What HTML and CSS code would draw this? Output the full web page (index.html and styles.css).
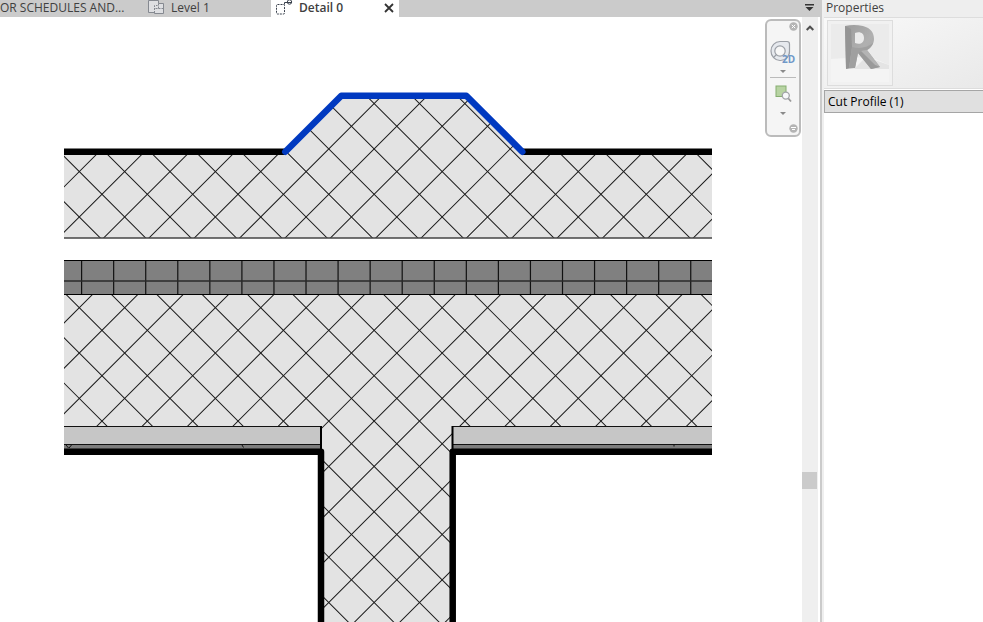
FILE: index.html
```html
<!DOCTYPE html>
<html lang="en">
<head>
    <meta charset="UTF-8">
    <meta name="viewport" content="width=device-width, initial-scale=1.0">
    <title>Detail 0</title>
    <link rel="stylesheet" href="styles.css">
</head>
<body>
    <div class="app">
        <main class="workspace">
            <nav class="tabs">
                <button class="tab tab-first">OR SCHEDULES AND...</button>
                <button class="tab tab-level">
                    <svg class="tab-icon" width="17" height="15" viewBox="0 0 17 15" fill="#dedfe2" stroke="#858990">
                        <path d="M.5 .5h10v3h5v10h-9v-1h-6z"/>
                        <path d="M6.500 13V5.500h3M10.500 3.500v5h-4M15.500 8.500h-5" fill="none" stroke-dasharray="2 1"/>
                    </svg>
                    Level 1
                </button>
                <div class="tab-active">
                    <button class="tab">
                        <svg class="tab-icon" width="17" height="15" viewBox="0 0 17 15" fill="none" stroke="#39404c">
                            <rect x=".5" y="4.500" width="8" height="9.500" rx="1" stroke-dasharray="2 1"/>
                            <path d="M8.500 4.500v-2h3M11 2.500h5"/>
                            <circle cx="13.500" cy="2" r="2.200"/>
                        </svg>
                        Detail 0
                    </button>
                    <button class="tab-close" aria-label="Close tab">
                        <svg width="10" height="10" viewBox="0 0 10 10" stroke="#333" stroke-width="1.800"><path d="M1 1l8 8M9 1L1 9"/></svg>
                    </button>
                </div>
                <button class="tab-list" aria-label="Show all tabs">
                    <svg width="9" height="8" viewBox="0 0 9 8" fill="#333"><path d="M0 0h9v1.500H0zM0.500 3h8L4.500 7z"/></svg>
                </button>
            </nav>

            <div class="view">
                <div class="canvas">
                    <svg class="drawing" viewBox="0 17 802 605" preserveAspectRatio="xMinYMin slice">
                        <defs>
                            <clipPath id="walls">
                                <path d="M64 152H285L341 96H466L522 152H712V238H64z"/>
                                <path d="M64 295H712V426H452V622H321V426H64z"/>
                            </clipPath>
                        </defs>

                        <!-- concrete with diagonal hatch -->
                        <g clip-path="url(#walls)">
                            <rect x="64" y="90" width="648" height="532" fill="#e3e3e3"/>
                            <g stroke="#1c1c1c" stroke-width="3000" stroke-dasharray="1 31.074" stroke-dashoffset=".5">
                                <path d="M-374.300 -282L1200 1292.300"/>
                                <path d="M-374.300 625.200L1200 -949.100"/>
                            </g>
                        </g>
                        <path d="M64 238H712" stroke="#444" stroke-width="1.300"/>

                        <!-- insulation -->
                        <rect x="64" y="260" width="648" height="35" fill="#808080"/>
                        <path d="M81 277.500H712" stroke="#111" stroke-width="34" stroke-dasharray="1.200 30.860"/>
                        <path d="M64 281H712" stroke="#2a2a2a" stroke-width="1.500"/>
                        <path d="M64 260.500H712M64 294.500H712" stroke="#000"/>

                        <!-- finish layers -->
                        <path d="M64 426H321V444H64zM452 426H712V444H452z" fill="#c6c6c6"/>
                        <path d="M64 444H321V450H64zM452 444H712V450H452z" fill="#7d7d7d"/>
                        <path d="M64 426.500H321M452 426.500H712M64 444.500H321M452 444.500H712" stroke="#111"/>
                        <path d="M66 445l2.500 3M71.500 445l-2.500 3M242 445l1.500 2.500M674 445v1.500" fill="none" stroke="#111"/>
                        <path d="M321 426V450M452.500 426V450" stroke="#000" stroke-width="2"/>

                        <!-- cut outline -->
                        <g fill="none" stroke="#000" stroke-width="6.500" stroke-linejoin="round">
                            <path d="M64 151.700H285M522 151.700H712"/>
                            <path d="M64 451.700H321V622M712 451.700H452.700V622"/>
                        </g>
                        <path d="M285.300 151.700L341.300 95.700H466.300L522.300 151.700" fill="none" stroke="#0039c0" stroke-width="6.500" stroke-linejoin="round" stroke-linecap="round"/>
                    </svg>

                    <div class="navbar">
                        <button class="nav-small" aria-label="Close">
                            <svg width="9" height="9" viewBox="0 0 9 9"><circle cx="4.500" cy="4.500" r="4.200" fill="#b4b4b4"/><path d="M2.800 2.800l3.400 3.400M6.200 2.800L2.800 6.200" stroke="#fff"/></svg>
                        </button>
                        <button class="nav-tool nav-wheel" aria-label="2D steering wheel">
                            <svg width="26" height="26" viewBox="0 0 26 26" fill="#e6e9ee" stroke="#9b9fa6" stroke-width="1.200">
                                <path d="M10 1.500H17Q19.500 1.500 19.500 4V11A9 9 0 0 1 10 20.500A9.300 9.300 0 0 1 1 11A9.300 9.300 0 0 1 10 1.500z"/>
                                <circle cx="10" cy="11" r="5.200" fill="#f7f7f7"/>
                                <path d="M6.500 14.500L3.500 17.500M13.500 14.500l2 2"/>
                                <text x="12" y="23" class="nav-2d">2D</text>
                            </svg>
                        </button>
                        <button class="nav-arrow" aria-label="Wheel options">
                            <svg width="6" height="3" viewBox="0 0 6 3" fill="#8a8a8a"><path d="M0 0h6L3 3z"/></svg>
                        </button>
                        <hr class="nav-line">
                        <button class="nav-tool nav-zoom" aria-label="Zoom in region">
                            <svg width="17" height="18" viewBox="0 0 17 18">
                                <rect x="1" y="1" width="10" height="10.500" fill="#b7d3a2" stroke="#86ad70"/>
                                <path d="M13 13l3 3.500" stroke="#999" stroke-width="1.800"/>
                                <circle cx="10.800" cy="10.600" r="3.500" fill="#f7f8fa" stroke="#a0a3a8" stroke-width="1.300"/>
                            </svg>
                        </button>
                        <button class="nav-arrow" aria-label="Zoom options">
                            <svg width="6" height="3" viewBox="0 0 6 3" fill="#8a8a8a"><path d="M0 0h6L3 3z"/></svg>
                        </button>
                        <button class="nav-small nav-menu" aria-label="Customize">
                            <svg width="9" height="9" viewBox="0 0 9 9"><circle cx="4.500" cy="4.500" r="4.200" fill="#b4b4b4"/><path d="M2 3.500h5M3 5.500h3" stroke="#fff"/></svg>
                        </button>
                    </div>
                </div>
                <div class="scrollbar">
                    <button class="scroll-up" aria-label="Scroll up">
                        <svg width="8" height="6" viewBox="0 0 8 6" fill="none" stroke="#505050" stroke-width="2"><path d="M.7 5L4 1.700L7.300 5"/></svg>
                    </button>
                    <div class="scroll-track">
                        <div class="scroll-thumb"></div>
                    </div>
                </div>
            </div>
        </main>

        <aside class="properties">
            <h2 class="properties-title">Properties</h2>
            <div class="type-preview">
                <div class="type-image">
                    <svg width="60" height="60" viewBox="0 0 60 60">
                        <defs>
                            <linearGradient id="face" x1="0" y1="0" x2="1" y2="1">
                                <stop offset="0" stop-color="#9c9c9c"/>
                                <stop offset=".5" stop-color="#b0b0b0"/>
                                <stop offset="1" stop-color="#a2a2a2"/>
                            </linearGradient>
                        </defs>
                        <path d="M1 1H59V42L40 34L1 36z" fill="#ebebeb"/>
                        <path d="M1 36L40 34L59 42V59H1z" fill="#f4f4f4"/>
                        <path d="M24 46L36 34L59 42V46z" fill="#e4e4e4"/>
                        <path fill="url(#face)" fill-rule="evenodd" d="M15 3Q24 1 33 3C41 5 44 10 44 16C44 21 41 25 37 27L50 44L41 46L28 30L25 45L16 46zM25 10V20C30 22 34 20 34 15C34 10 30 8 25 10z"/>
                        <path d="M15 3L21 6L22 24L19 45L16 46z" fill="#959595"/>
                        <path d="M22 24Q34 27 43 20Q41 25 37 27L31 28L28 30L25 45L19 45z" fill="#a0a0a0"/>
                        <path d="M31 28L37 27L50 44L45 42z" fill="#b4b4b4"/>
                        <path d="M28 30L31 28L45 42L50 44L41 46z" fill="#9a9a9a"/>
                    </svg>
                </div>
            </div>
            <div class="type-row">Cut Profile (1)</div>
        </aside>
    </div>
</body>
</html>
```

FILE: styles.css
```css
:root {
    --bar: #cbcbcb;
    --panel: #efefef;
    --text: #404040;
}

* {
    margin: 0;
    padding: 0;
    box-sizing: border-box;
}

body {
    font-family: "Open Sans", "Noto Sans", sans-serif;
    font-size: 12px;
    line-height: 16px;
    color: var(--text);
    background-color: #fff;
}

button {
    font: inherit;
    color: inherit;
    background: none;
    border: none;
    white-space: nowrap;
}

svg {
    display: block;
}

.app {
    display: flex;
    height: 100vh;
    overflow: hidden;
}

.workspace {
    flex: 1;
    min-width: 0;
    display: flex;
    flex-direction: column;
}

/* Tabs */
.tabs {
    display: flex;
    height: 17px;
    background-color: var(--bar);
}

.tab {
    display: flex;
    align-items: flex-start;
    gap: 6px;
    text-align: left;
}

.tab-first {
    width: 148px;
}

.tab-level {
    width: 123px;
}

.tab-active {
    display: flex;
    justify-content: space-between;
    width: 128px;
    padding: 0 5px;
    background-color: #fff;
    font-weight: 600;
}

.tab-close {
    display: flex;
    padding-top: 3px;
}

.tab-list {
    display: flex;
    margin-left: auto;
    padding: 4px 6px;
}

/* Drawing area */
.view {
    flex: 1;
    min-height: 0;
    display: flex;
}

.canvas {
    position: relative;
    flex: 1;
    min-width: 0;
    background-color: #fff;
}

.drawing {
    width: 100%;
    height: 100%;
}

.navbar {
    position: absolute;
    top: 2px;
    right: 1px;
    display: flex;
    flex-direction: column;
    align-items: center;
    width: 36px;
    height: 118px;
    border: 2px solid #bbb;
    border-radius: 6px;
    background-color: #f5f5f5;
}

.nav-small {
    align-self: flex-end;
    padding: 1px 1px 0 0;
}

.nav-wheel {
    margin-top: 9px;
}

.nav-arrow {
    padding-top: 4px;
}

.nav-line {
    width: 26px;
    margin: 4px 0 7px;
    border: none;
    border-top: 1px solid #bbb;
}

.nav-zoom {
    margin-bottom: 5px;
}

.nav-menu {
    margin-top: auto;
    padding-bottom: 2px;
}

.nav-2d {
    font-size: 10px;
    font-weight: bold;
    fill: #7098c8;
    stroke: none;
}

.scrollbar {
    display: flex;
    flex-direction: column;
    width: 18px;
    border-right: 2px solid #fff;
    background-color: var(--panel);
}

.scroll-up {
    display: flex;
    justify-content: center;
    padding: 8px 1px 8px 0;
}

.scroll-track {
    flex: 1;
    display: flex;
    flex-direction: column;
    justify-content: flex-end;
    padding-bottom: 133px;
}

.scroll-thumb {
    width: 15px;
    height: 17px;
    background-color: #cbcbcb;
}

/* Properties panel */
.properties {
    width: 163px;
    border-left: 2px solid var(--bar);
    padding-left: 2px;
    background: linear-gradient(to right, var(--panel) 2px, #fff 2px);
}

.properties-title {
    height: 17px;
    padding-left: 2px;
    font-size: 12px;
    line-height: 16px;
    font-weight: normal;
    background-color: #eee;
}

.type-preview {
    height: 72px;
    padding: 2px 3px;
    border-top: 1px solid #ddd;
    border-bottom: 1px solid #ddd;
    background: linear-gradient(to bottom right, #f9f9f9, #e9e9e9);
}

.type-image {
    width: 66px;
    height: 66px;
    padding: 2px;
    border: 1px solid #ddd;
    background-color: #f1f1f1;
}

.type-row {
    height: 23px;
    margin-top: 1px;
    padding-left: 3px;
    border: 1px solid #a5a5a5;
    border-right: none;
    line-height: 22px;
    color: #000;
    background-color: #e0e0e0;
}
```
